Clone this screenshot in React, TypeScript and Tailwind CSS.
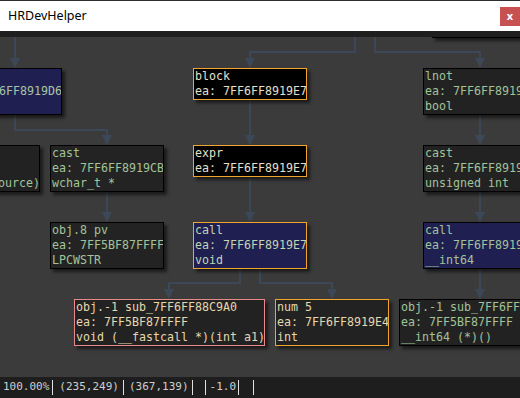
import React from 'react';

type Node = {
  x: number;
  y: number;
  w: number;
  lines: string[];
  bg: string;
  border: string;
  text: string;
};

const GREEN = 'text-[#a2c39a]';

const nodes: Node[] = [
  { x: 432, y: -46, w: 114, lines: ['', '', ''], bg: 'bg-[#222222]', border: 'border-black', text: GREEN },
  { x: -52, y: 31, w: 114, lines: ['var', 'ea: 7FF6FF8919D6', 'int'], bg: 'bg-[#1f1f52]', border: 'border-black', text: 'text-[#a8c4a4]' },
  { x: 193, y: 31, w: 114, lines: ['block', 'ea: 7FF6FF8919E7'], bg: 'bg-black', border: 'border-[#f2a52a]', text: 'text-[#e4e0cc]' },
  { x: 423, y: 31, w: 114, lines: ['lnot', 'ea: 7FF6FF8919E5', 'bool'], bg: 'bg-[#222222]', border: 'border-black', text: GREEN },
  { x: -74, y: 108, w: 114, lines: ['var', 'ea', 'wchar_t (source)'], bg: 'bg-[#222222]', border: 'border-black', text: GREEN },
  { x: 50, y: 108, w: 114, lines: ['cast', 'ea: 7FF6FF8919CB', 'wchar_t *'], bg: 'bg-[#232323]', border: 'border-black', text: GREEN },
  { x: 193, y: 108, w: 114, lines: ['expr', 'ea: 7FF6FF8919E7'], bg: 'bg-black', border: 'border-[#f2a52a]', text: 'text-[#e4e0cc]' },
  { x: 423, y: 108, w: 114, lines: ['cast', 'ea: 7FF6FF8919E5', 'unsigned int'], bg: 'bg-[#222222]', border: 'border-black', text: GREEN },
  { x: 50, y: 185, w: 114, lines: ['obj.8 pv', 'ea: 7FF5BF87FFFF', 'LPCWSTR'], bg: 'bg-[#232323]', border: 'border-black', text: GREEN },
  { x: 193, y: 185, w: 114, lines: ['call', 'ea: 7FF6FF8919E7', 'void'], bg: 'bg-[#1f1f52]', border: 'border-[#f2a52a]', text: 'text-[#c2d4b2]' },
  { x: 423, y: 185, w: 114, lines: ['call', 'ea: 7FF6FF8919E5', '__int64'], bg: 'bg-[#1f1f52]', border: 'border-black', text: GREEN },
  { x: 74, y: 262, w: 191, lines: ['obj.-1 sub_7FF6FF88C9A0', 'ea: 7FF5BF87FFFF', 'void (__fastcall *)(int a1)'], bg: 'bg-[#222222]', border: 'border-[#e98a8a]', text: 'text-[#e6d8ae]' },
  { x: 275, y: 262, w: 114, lines: ['num 5', 'ea: 7FF6FF8919E4', 'int'], bg: 'bg-[#222222]', border: 'border-[#f2a52a]', text: 'text-[#e6d8ae]' },
  { x: 399, y: 262, w: 163, lines: ['obj.-1 sub_7FF6FF88C9A0', 'ea: 7FF5BF87FFFF', '__int64 (*)()'], bg: 'bg-[#222222]', border: 'border-black', text: GREEN },
];

const edges = [
  'M15 0 V22',
  'M15 78 V93 H107 V99',
  'M355 0 V15 H250 V22',
  'M375 0 V15 H480 V22',
  'M250 63 V99',
  'M250 140 V176',
  'M107 155 V176',
  'M480 78 V99',
  'M480 155 V176',
  'M240 232 V246 H169 V253',
  'M260 232 V246 H332 V253',
  'M480 232 V253',
];

const arrows: [number, number][] = [
  [15, 31], [107, 108], [250, 31], [480, 31], [250, 108], [250, 185],
  [107, 185], [480, 108], [480, 185], [169, 262], [332, 262], [480, 262],
];

function GraphNode({ n }: { n: Node }) {
  return (
    <div
      className={`absolute border ${n.bg} ${n.border} ${n.text} shadow-[3px_3px_3px_rgba(0,0,0,0.55)] whitespace-pre leading-[15px] overflow-hidden`}
      style={{ left: n.x, top: n.y, width: n.w }}
    >
      {n.lines.map((l, i) => (
        <div key={i} className="h-[15px] pl-px">{l}</div>
      ))}
    </div>
  );
}

function Sep({ ml }: { ml: string }) {
  return <span className={`inline-block w-px h-[15px] bg-[#e0e0e0] ${ml}`} />;
}

export default function App() {
  return (
    <div className="w-[520px] h-[398px] flex flex-col overflow-hidden bg-[#3b3b3b]" style={{ fontFamily: '"DejaVu Sans Mono", monospace' }}>
      <div className="h-[31px] shrink-0 bg-white border-t border-[#2e2e2e] flex items-center justify-between">
        <span className="pl-[8px] text-[12.5px] text-black" style={{ fontFamily: '"Noto Sans", sans-serif' }}>HRDevHelper</span>
        <div className="w-[20px] h-[19px] bg-[#c75050] text-white text-[11px] font-bold flex items-center justify-center leading-none pb-px" style={{ fontFamily: '"Noto Sans", sans-serif' }}>x</div>
      </div>
      <div className="h-[6px] shrink-0 bg-[#1f1f1f]" />
      <div className="relative flex-1 overflow-hidden text-[11.63px]">
        <svg className="absolute inset-0" width="520" height="340">
          {edges.map((d, i) => (
            <path key={i} d={d} fill="none" stroke="#3c4857" strokeWidth="2" strokeLinejoin="round" />
          ))}
          {arrows.map(([x, y], i) => (
            <polygon key={i} points={`${x - 5},${y - 10} ${x + 5},${y - 10} ${x},${y}`} fill="#3c4857" />
          ))}
        </svg>
        {nodes.map((n, i) => (
          <GraphNode key={i} n={n} />
        ))}
      </div>
      <div className="h-[21px] shrink-0 bg-[#1e1e1e] flex items-center text-[11px] text-[#cfcfcf] whitespace-pre">
        <span className="pl-[3px]">100.00%</span>
        <Sep ml="ml-[3px]" />
        <span className="ml-[6px]">(235,249)</span>
        <Sep ml="ml-[4px]" />
        <span className="ml-[5px]">(367,139)</span>
        <Sep ml="ml-[3px]" />
        <Sep ml="ml-[12px]" />
        <span className="ml-[4px]">-1.0</span>
        <Sep ml="ml-[2px]" />
        <Sep ml="ml-[14px]" />
      </div>
    </div>
  );
}
